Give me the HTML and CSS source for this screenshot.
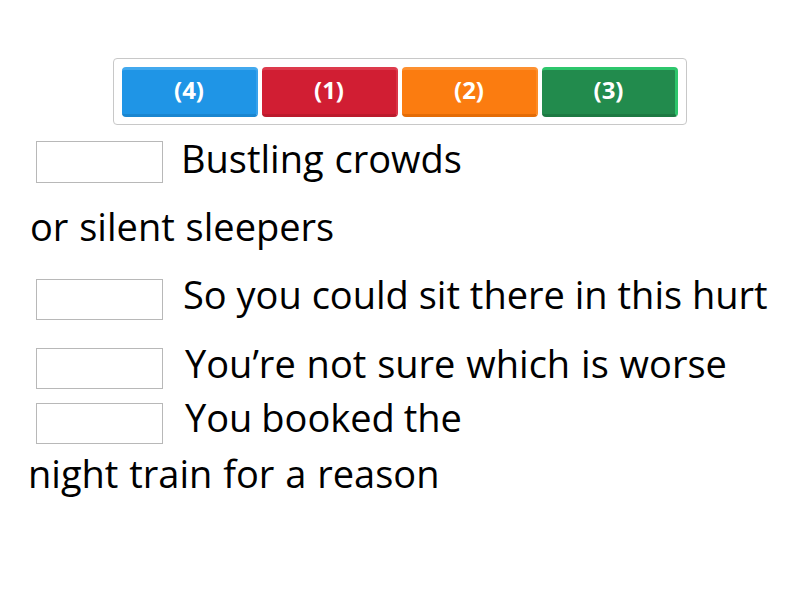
FILE: index.html
```html
<!DOCTYPE html>
<html>
<head>
<meta charset="utf-8">
<link rel="stylesheet" href="styles.css">
</head>
<body>
<div class="page">
  <div class="bar">
    <div class="btn blue">(4)</div>
    <div class="btn red">(1)</div>
    <div class="btn orange">(2)</div>
    <div class="btn green">(3)</div>
  </div>
  <div class="row r1"><div class="box"></div><span class="txt t1">Bustling crowds</span></div>
  <div class="line l1">or silent sleepers</div>
  <div class="row r2"><div class="box"></div><span class="txt t2">So you could sit there in this hurt</span></div>
  <div class="row r3"><div class="box"></div><span class="txt t3">You’re not sure which is worse</span></div>
  <div class="row r4"><div class="box"></div><span class="txt t4">You booked the</span></div>
  <div class="line l2">night train for a reason</div>
</div>
</body>
</html>
```
FILE: styles.css
```css
html, body { margin: 0; padding: 0; background: #fff; }
body { font-family: "Open Sans", "DejaVu Sans", sans-serif; color: #000; }
.page { width: 800px; height: 600px; overflow: hidden; }
.bar {
  margin: 58px 0 0 113px;
  width: 574px; height: 67px; box-sizing: border-box;
  border: 1px solid #c8c8c8; border-radius: 4px;
  padding: 8px; display: flex; gap: 4px;
}
.btn {
  width: 136px; height: 50px; box-sizing: border-box;
  border-radius: 4px; color: #fff; font-weight: 700; font-size: 24px;
  display: flex; align-items: center; justify-content: center;
  padding-bottom: 6px;
}
.blue { background: #1f95e6; border-top: 3px solid #42a9ee; border-bottom: 3px solid #1a86d0; border-right: 2px solid #37a2ec; }
.red { background: #d11e33; border-top: 3px solid #dd3a4c; border-bottom: 3px solid #bc1a2c; border-right: 2px solid #da3447; }
.orange { background: #fb7c10; border-top: 3px solid #fd9030; border-bottom: 3px solid #e46c06; border-right: 2px solid #fd8c26; }
.green { background: #228b4d; border-top: 3px solid #2dc66c; border-bottom: 3px solid #1d7a43; border-right: 3px solid #2dc66c; }
.row { display: flex; align-items: flex-start; margin-left: 36px; }
.box { width: 127px; height: 42px; box-sizing: border-box; border: 1px solid #b8b8b8; flex: none; margin-top: 10px; }
.txt, .line { font-size: 38px; line-height: 52px; white-space: nowrap; word-spacing: 1px; }
.r1 { margin-top: 7px; }
.r1 .box { margin-top: 9px; }
.t1 { margin-left: 18px; }
.l1 { margin: 16px 0 0 30px; }
.r2 { margin-top: 16px; }
.r2 .box { margin-top: 11px; height: 41px; }
.t2 { margin-left: 20px; word-spacing: 0; }
.r3 { margin-top: 17px; }
.r3 .box { margin-top: 11px; height: 41px; }
.t3 { margin-left: 22px; }
.r4 { margin-top: 2px; }
.r4 .box { margin-top: 12px; height: 41px; }
.t4 { margin-left: 22px; word-spacing: -1px; }
.l2 { margin: 3px 0 0 28px; }
```
